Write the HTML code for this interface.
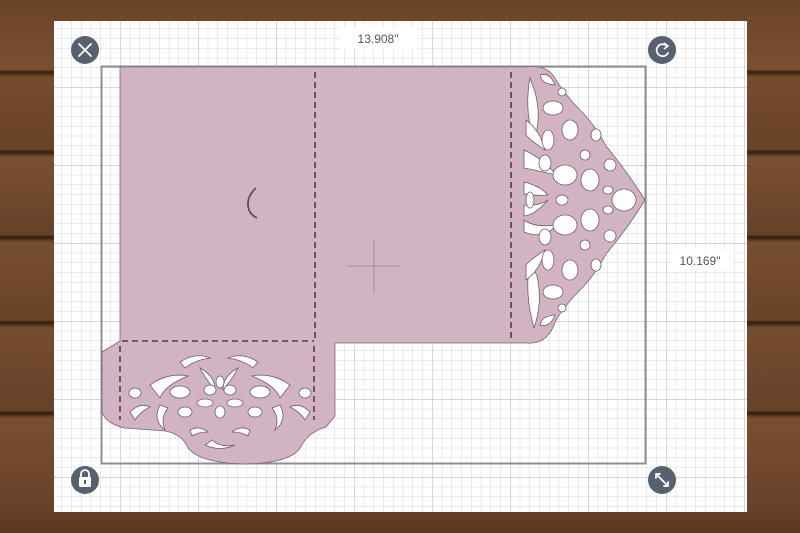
<!DOCTYPE html>
<html><head><meta charset="utf-8"><style>
html,body{margin:0;padding:0;width:800px;height:533px;overflow:hidden}
svg{display:block}
text{font-family:"Liberation Sans",sans-serif}
</style></head><body>
<svg width="800" height="533" viewBox="0 0 800 533" xmlns="http://www.w3.org/2000/svg">
<defs>
<linearGradient id="wood" x1="0" y1="0" x2="0" y2="1">
<stop offset="0" stop-color="#6a4429"/>
<stop offset="0.13" stop-color="#7a5030"/>
<stop offset="0.135" stop-color="#33200f"/>
<stop offset="0.145" stop-color="#744c2e"/>
<stop offset="0.28" stop-color="#684229"/>
<stop offset="0.285" stop-color="#33200f"/>
<stop offset="0.295" stop-color="#7a5030"/>
<stop offset="0.44" stop-color="#66422a"/>
<stop offset="0.445" stop-color="#301d0e"/>
<stop offset="0.455" stop-color="#774e2f"/>
<stop offset="0.6" stop-color="#694429"/>
<stop offset="0.605" stop-color="#301d0e"/>
<stop offset="0.615" stop-color="#764d2e"/>
<stop offset="0.77" stop-color="#66422a"/>
<stop offset="0.775" stop-color="#301d0e"/>
<stop offset="0.785" stop-color="#794f30"/>
<stop offset="0.95" stop-color="#684229"/>
<stop offset="1" stop-color="#5a3820"/>
</linearGradient>
<pattern id="minor" patternUnits="userSpaceOnUse" x="120" y="87" width="9.75" height="9.75">
<path d="M0,0 H9.75 M0,0 V9.75" stroke="#d8d8d8" stroke-width="1" fill="none"/>
</pattern>
<pattern id="major" patternUnits="userSpaceOnUse" x="120" y="87" width="78" height="78">
<path d="M0,0 H78 M0,0 V78" stroke="#bdbdbd" stroke-width="1.2" fill="none"/>
</pattern>
</defs>
<rect width="800" height="533" fill="url(#wood)"/>
<rect x="54" y="21" width="693" height="491" fill="#fff"/>
<rect x="54" y="21" width="693" height="491" fill="url(#minor)"/>
<rect x="54" y="21" width="693" height="491" fill="url(#major)"/>
<rect x="340" y="27" width="78" height="22" fill="#fff"/>
<text x="378" y="43" font-size="12" fill="#555" text-anchor="middle">13.908"</text>
<rect x="672" y="250" width="60" height="20" fill="#fff"/>
<text x="700" y="265" font-size="12" fill="#555" text-anchor="middle">10.169"</text>

<rect x="101.5" y="66.5" width="544" height="397" fill="none" stroke="#8f8f8f" stroke-width="2"/>

<path fill="#d2b3c4" stroke="#7a6670" stroke-width="0.8" d="M120,67 H527 Q548,64 556,80 Q566,96 580,110 Q596,126 606,146 Q626,170 645,200 Q628,228 606,254 Q596,274 580,290 Q566,304 556,320 Q548,345 527,343 H335 V416 L326,427 Q308,432 300,448 Q290,463 245,464 Q200,463 188,448 Q182,434 165,431 L125,428 Q106,424 102,412 V352 L120,341 Z"/>

<g fill="#fff" stroke="#6f5f68" stroke-width="0.8">
<path d="M530,78 Q524,110 534,140 Q542,118 535,92 Z"/>
<path d="M530,262 Q524,292 534,328 Q543,302 537,276 Z"/>
<path d="M540,75 Q550,72 555,85 Q545,84 542,80 Z"/>
<path d="M540,325 Q550,328 555,315 Q545,316 542,320 Z"/>
<path d="M524,150 Q545,160 556,175 Q535,170 524,168 Z"/>
<path d="M524,232 Q545,240 556,225 Q535,228 524,220 Z"/>
<path d="M524,182 Q540,186 548,195 Q535,196 524,194 Z"/>
<path d="M524,205 Q540,206 548,200 Q535,215 524,216 Z"/>
<path d="M526,120 Q540,130 545,150 Q530,140 526,135 Z"/>
<path d="M526,280 Q540,270 545,250 Q530,260 526,265 Z"/>
<ellipse cx="553" cy="108" rx="10" ry="7"/>
<ellipse cx="553" cy="292" rx="10" ry="7"/>
<ellipse cx="570" cy="130" rx="8" ry="10"/>
<ellipse cx="570" cy="270" rx="8" ry="10"/>
<ellipse cx="562" cy="92" rx="4" ry="4"/>
<ellipse cx="562" cy="308" rx="4" ry="4"/>
<ellipse cx="596" cy="135" rx="5" ry="6"/>
<ellipse cx="596" cy="265" rx="5" ry="6"/>
<ellipse cx="610" cy="165" rx="6" ry="6"/>
<ellipse cx="610" cy="236" rx="6" ry="6"/>
<ellipse cx="565" cy="175" rx="12" ry="10"/>
<ellipse cx="565" cy="225" rx="12" ry="10"/>
<ellipse cx="545" cy="163" rx="6" ry="8"/>
<ellipse cx="545" cy="237" rx="6" ry="8"/>
<ellipse cx="590" cy="180" rx="9" ry="11"/>
<ellipse cx="590" cy="220" rx="9" ry="11"/>
<ellipse cx="624" cy="200" rx="12" ry="11"/>
<ellipse cx="608" cy="190" rx="5" ry="4"/>
<ellipse cx="608" cy="210" rx="5" ry="4"/>
<ellipse cx="562" cy="200" rx="6" ry="5"/>
<ellipse cx="548" cy="140" rx="6" ry="10"/>
<ellipse cx="548" cy="260" rx="6" ry="10"/>
<ellipse cx="585" cy="155" rx="5" ry="5"/>
<ellipse cx="585" cy="245" rx="5" ry="5"/>
<ellipse cx="530" cy="200" rx="4" ry="8"/>
</g>
<g fill="#fff" stroke="#6f5f68" stroke-width="0.8">
<path d="M180,362 Q195,352 210,358 Q195,360 185,368 Z"/>
<path d="M258,362 Q243,352 228,358 Q243,360 253,368 Z"/>
<path d="M200,368 Q215,376 215,390 Q205,378 200,368 Z"/>
<path d="M238,368 Q223,376 223,390 Q233,378 238,368 Z"/>
<path d="M150,385 Q168,372 188,376 Q165,385 160,398 Z"/>
<path d="M290,385 Q272,372 252,376 Q275,385 280,398 Z"/>
<ellipse cx="135" cy="393" rx="6" ry="5"/>
<ellipse cx="305" cy="393" rx="6" ry="5"/>
<ellipse cx="180" cy="392" rx="10" ry="6"/>
<ellipse cx="260" cy="392" rx="10" ry="6"/>
<ellipse cx="210" cy="390" rx="6" ry="5"/>
<ellipse cx="230" cy="390" rx="6" ry="5"/>
<ellipse cx="220" cy="382" rx="4" ry="6"/>
<ellipse cx="205" cy="403" rx="8" ry="4"/>
<ellipse cx="235" cy="403" rx="8" ry="4"/>
<ellipse cx="220" cy="412" rx="5" ry="6"/>
<ellipse cx="185" cy="412" rx="7" ry="5"/>
<ellipse cx="255" cy="412" rx="7" ry="5"/>
<path d="M130,412 Q140,402 150,407 Q140,412 135,420 Z"/>
<path d="M310,412 Q300,402 290,407 Q300,412 305,420 Z"/>
<path d="M160,405 Q152,420 165,430 Q160,418 168,408 Z"/>
<path d="M280,405 Q288,420 275,430 Q280,418 272,408 Z"/>
<path d="M190,430 Q200,425 208,432 Q198,432 192,436 Z"/>
<path d="M250,430 Q240,425 232,432 Q242,432 248,436 Z"/>
<path d="M205,445 Q220,452 235,445 Q220,448 212,440 Z"/>
</g>
<g stroke="#4e3c46" stroke-width="1.6" stroke-dasharray="6,4" fill="none">
<line x1="315" y1="72" x2="315" y2="338"/>
<line x1="511" y1="72" x2="511" y2="338"/>
<line x1="122" y1="341" x2="314" y2="341"/>
<line x1="120" y1="346" x2="120" y2="420"/>
<line x1="314" y1="346" x2="314" y2="420"/>
</g>
<path d="M256,188 Q245,198 249,210 Q251,215 257,218" fill="none" stroke="#555" stroke-width="1.8"/>
<g stroke="#8d8a8d" stroke-width="0.8"><line x1="347" y1="266" x2="401" y2="266"/><line x1="374" y1="240" x2="374" y2="293"/></g>

<g fill="#56626d">
<circle cx="85" cy="50" r="14"/><circle cx="662" cy="50" r="14"/>
<circle cx="85" cy="480" r="14"/><circle cx="662" cy="480" r="14"/>
</g>
<g stroke="#fff" stroke-width="1.8" fill="none" stroke-linecap="round">
<path d="M79,44 L91,56 M91,44 L79,56"/>
<path d="M667,46 A6,6 0 1 0 668,53"/>
<path d="M81,477 V474 A4,4 0 0 1 89,474 V477"/>
<path d="M656,474 L668,486 M656,474 h4 M656,474 v4 M668,486 h-4 M668,486 v-4"/>
</g>
<path d="M664,43 L668,46 L664,49" fill="none" stroke="#fff" stroke-width="1.6"/>
<rect x="79" y="477" width="12" height="10" fill="#fff" rx="1"/>
<rect x="84" y="480" width="2" height="4" fill="#56626d"/>
</svg>
</body></html>
